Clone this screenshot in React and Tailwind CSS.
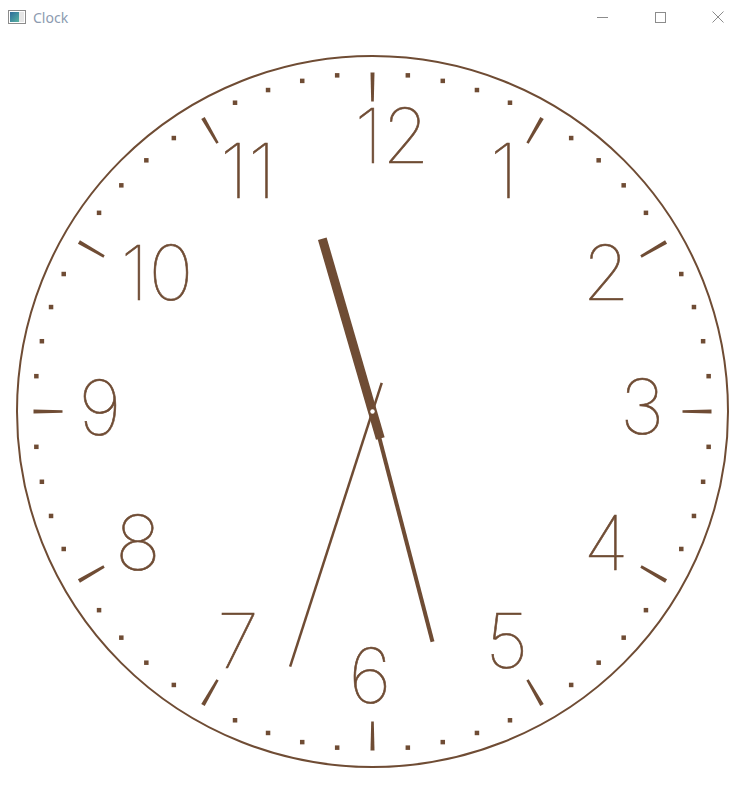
import React from 'react';

const BROWN = '#6f4c34';
const CX = 372.5;
const CY = 411.5;

const numerals = [
  { t: '12', x: 392, y: 163 },
  { t: '1', x: 504, y: 198 },
  { t: '2', x: 606, y: 300 },
  { t: '3', x: 642, y: 434 },
  { t: '4', x: 606, y: 570 },
  { t: '5', x: 507, y: 668 },
  { t: '6', x: 370, y: 703 },
  { t: '7', x: 238, y: 668 },
  { t: '8', x: 138, y: 570 },
  { t: '9', x: 100, y: 435 },
  { t: '10', x: 157, y: 300 },
  { t: '11', x: 248, y: 198 },
];

const Hand = ({ angle, len, tail, width }) => (
  <rect
    x={CX - width / 2}
    y={CY - len}
    width={width}
    height={len + tail}
    fill={BROWN}
    transform={`rotate(${angle} ${CX} ${CY})`}
  />
);

const TitleBar = () => (
  <div className="flex h-[34px] items-center justify-between bg-white">
    <div className="flex items-center gap-[7px] pl-[8px]">
      <div className="flex h-[14px] w-[18px] border border-[#8c8c8c] bg-white p-[1px]">
        <div className="h-full w-[9px] bg-gradient-to-br from-[#2f6b9a] to-[#5ab3a0]" />
        <div className="h-full flex-1 bg-[#e6e6e6]" />
      </div>
      <span className="text-[14px] text-[#8d9bb0]" style={{ fontFamily: '"Noto Sans", "Liberation Sans", sans-serif' }}>
        Clock
      </span>
    </div>
    <div className="flex h-full items-center">
      <div className="flex h-full w-[58px] items-center justify-center">
        <div className="h-px w-[11px] bg-[#8c8c8c]" />
      </div>
      <div className="flex h-full w-[58px] items-center justify-center">
        <div className="h-[11px] w-[11px] border border-[#8c8c8c]" />
      </div>
      <div className="flex h-full w-[58px] items-center justify-center">
        <svg width="12" height="12" viewBox="0 0 12 12">
          <path d="M0.5 0.5 L11.5 11.5 M11.5 0.5 L0.5 11.5" stroke="#8c8c8c" strokeWidth="1" />
        </svg>
      </div>
    </div>
  </div>
);

const ClockFace = () => {
  const marks = [];
  for (let i = 0; i < 60; i++) {
    const a = i * 6;
    if (i % 5 === 0) {
      marks.push(
        <polygon
          key={i}
          points={`${CX - 2},${CY - 339} ${CX + 2},${CY - 339} ${CX + 1.3},${CY - 310} ${CX - 1.3},${CY - 310}`}
          fill={BROWN}
          transform={`rotate(${a} ${CX} ${CY})`}
        />
      );
    } else {
      const r = 338;
      const rad = (a * Math.PI) / 180;
      const x = CX + r * Math.sin(rad);
      const y = CY - r * Math.cos(rad);
      marks.push(<rect key={i} x={x - 2.25} y={y - 2.25} width="4.5" height="4.5" fill={BROWN} />);
    }
  }

  return (
    <svg width="747" height="751" viewBox="0 34 747 751" className="block">
      <circle cx={CX} cy={CY} r="355.5" fill="white" stroke={BROWN} strokeWidth="2" />
      {marks}
      {numerals.map((n) => (
        <text
          key={n.t}
          x={n.x}
          y={n.y}
          textAnchor="middle"
          fill={BROWN}
          stroke={BROWN}
          strokeWidth="0.6"
          fontSize="76"
          fontWeight="100"
          style={{ fontFamily: 'Inter, "Noto Sans", sans-serif' }}
        >
          {n.t}
        </text>
      ))}
      <Hand angle={343.8} len={180} tail={28} width={9} />
      <Hand angle={165.4} len={238} tail={20} width={4} />
      <Hand angle={197.9} len={268} tail={30} width={2.5} />
      <circle cx={CX} cy={CY} r="2.2" fill="white" />
    </svg>
  );
};

export default function App() {
  return (
    <div className="h-[785px] w-[747px] overflow-hidden bg-white">
      <TitleBar />
      <ClockFace />
    </div>
  );
}
